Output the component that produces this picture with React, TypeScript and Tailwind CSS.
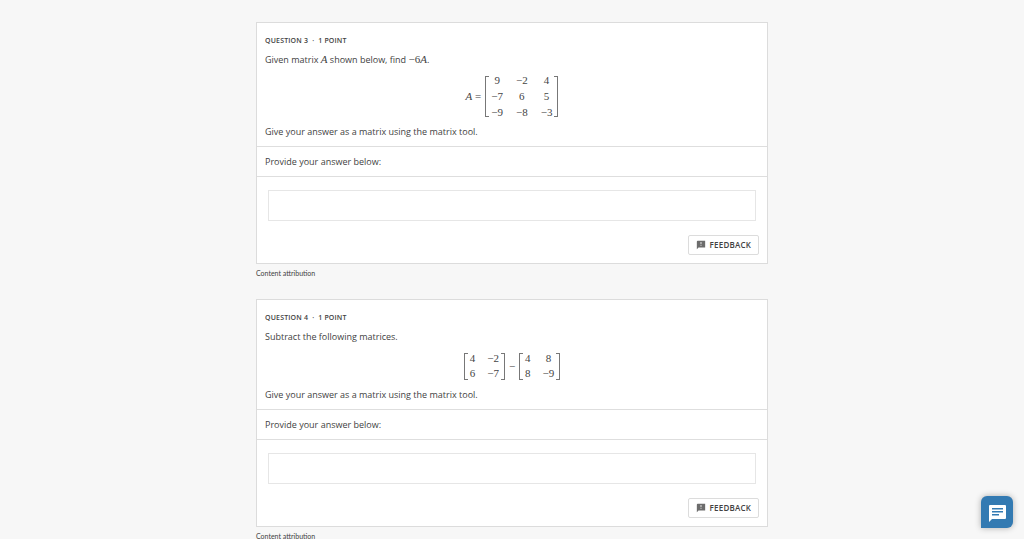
import type { ReactNode } from "react";

const MATH = "font-['Liberation_Serif',serif] text-[11px]";

function Matrix({ rows }: { rows: string[][] }) {
  const shape =
    rows.length === 3
      ? "grid-cols-[repeat(3,auto)] gap-x-[13px] -mt-1 -mb-[3px] leading-4"
      : "grid-cols-[repeat(2,auto)] gap-x-3 -mt-0.5 -mb-px leading-[15px]";
  return (
    <span className="flex">
      <span className="w-1 border-y border-l border-[#777]" />
      <span className={`grid px-0.5 text-center ${shape}`}>
        {rows.flat().map((value, i) => (
          <span key={i}>{value}</span>
        ))}
      </span>
      <span className="w-1 border-y border-r border-[#777]" />
    </span>
  );
}

function FeedbackIcon() {
  return (
    <svg viewBox="0 0 24 24" className="size-[10px] fill-[#6c6c6c]" aria-hidden="true">
      <path d="M22 2H4C2.900 2 2 2.900 2 4v18l4-4h16V2zm-9 12h-2v-2h2v2zm0-4h-2V5h2v5z" />
    </svg>
  );
}

type QuestionProps = { number: number; prompt: ReactNode; formula: ReactNode };

function Question({ number, prompt, formula }: QuestionProps) {
  const id = `answer-${number}`;
  return (
    <section>
      <div className="border border-[#dcdcdc] bg-white">
        <div className="px-2 pt-3 pb-[7px]">
          <h2 className="text-[7px] leading-3 font-semibold tracking-wide">QUESTION {number} &nbsp;·&nbsp; 1 POINT</h2>
          <p className="mt-1.5 leading-[14px]">{prompt}</p>
          <div className={`flex items-center justify-center pt-[9px] pb-2 text-[#444] ${MATH}`}>{formula}</div>
          <p className="leading-[14px]">Give your answer as a matrix using the matrix tool.</p>
        </div>
        <label htmlFor={id} className="block border-y border-[#dedede] px-2 py-[7px] leading-[15px]">
          Provide your answer below:
        </label>
        <div className="px-[11px] pt-[13px]">
          <input id={id} type="text" className="block h-[31px] w-full border border-[#e6e6e6] bg-white px-2 outline-none" />
        </div>
        <div className="flex justify-end px-2 pt-[14px] pb-2">
          <button type="button" className="flex h-5 items-center gap-1 rounded-[2px] border border-[#dcdcdc] px-[7px] text-[8px] font-semibold tracking-wide">
            <FeedbackIcon />
            FEEDBACK
          </button>
        </div>
      </div>
      <a href="#attribution" className="mt-1 block w-fit font-['Lato','Open_Sans',sans-serif] text-[7px] leading-[10px]">
        Content attribution
      </a>
    </section>
  );
}

export default function App() {
  return (
    <div className="min-h-screen bg-[#f7f7f7] px-4 font-['Open_Sans',sans-serif] text-[9px] text-[#424242]">
      <main className="mx-auto flex max-w-[512px] flex-col gap-[21px] pt-[22px]">
        <Question
          number={3}
          prompt={
            <>
              Given matrix <i className={`${MATH} leading-none`}>A</i> shown below, find{" "}
              <span className={`${MATH} leading-none`}>−6<i>A</i></span>.
            </>
          }
          formula={
            <>
              <span className="mr-1"><i>A</i> =</span>
              <Matrix rows={[["9", "−2", "4"], ["−7", "6", "5"], ["−9", "−8", "−3"]]} />
            </>
          }
        />
        <Question
          number={4}
          prompt="Subtract the following matrices."
          formula={
            <>
              <Matrix rows={[["4", "−2"], ["6", "−7"]]} />
              <span className="mx-1">−</span>
              <Matrix rows={[["4", "8"], ["8", "−9"]]} />
            </>
          }
        />
      </main>
      <button
        type="button"
        aria-label="Open chat"
        className="fixed right-[11px] bottom-[11px] flex size-8 items-center justify-center rounded-t-md rounded-br-md bg-[#337ab2] shadow-[0_0_6px_rgba(0,0,0,0.3)]"
      >
        <svg viewBox="0 0 20 20" className="size-5" aria-hidden="true">
          <path fill="#fff" d="M3 3h15a1 1 0 0 1 1 1v12a1 1 0 0 1-1 1H5l-3 3V4a1 1 0 0 1 1-1z" />
          <path stroke="#337ab2" strokeWidth="1.600" d="M5 6.800h11M5 9.800h11M5 12.800h7" />
        </svg>
      </button>
    </div>
  );
}
